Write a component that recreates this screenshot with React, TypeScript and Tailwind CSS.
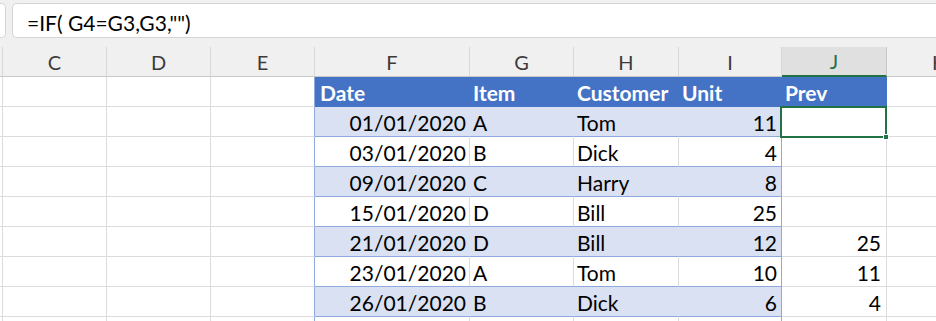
const rows = [
  { date: "01/01/2020", item: "A", customer: "Tom", unit: "11", prev: "" },
  { date: "03/01/2020", item: "B", customer: "Dick", unit: "4", prev: "" },
  { date: "09/01/2020", item: "C", customer: "Harry", unit: "8", prev: "" },
  { date: "15/01/2020", item: "D", customer: "Bill", unit: "25", prev: "" },
  { date: "21/01/2020", item: "D", customer: "Bill", unit: "12", prev: "25" },
  { date: "23/01/2020", item: "A", customer: "Tom", unit: "10", prev: "11" },
  { date: "26/01/2020", item: "B", customer: "Dick", unit: "6", prev: "4" },
];

// column B is only a sliver, its letter doesn't show
const letters = ["", "C", "D", "E", "F", "G", "H", "I", "J", "K"];

// grid cell base: 30px tall row incl. bottom border
const cell = "h-[30px] flex items-center pt-[2px] border-r border-b whitespace-nowrap overflow-hidden";

function Blank({ edge }: { edge?: boolean }) {
  return <div className={`${cell} bg-white border-b-[#dcdcdc] ${edge ? "border-r-[#8ea9db]" : "border-r-[#dcdcdc]"}`} />;
}

function DataRow({ r, band }: { r: (typeof rows)[number] | null; band: boolean }) {
  const bg = band ? "bg-[#d9e1f2]" : "bg-white";
  const inner = band ? "border-r-[#d9e1f2]" : "border-r-[#dcdcdc]";
  return (
    <>
      <Blank />
      <Blank />
      <Blank />
      <Blank edge />
      <div className={`${cell} ${bg} ${inner} border-b-[#8ea9db] justify-end pr-[3px]`}>{r?.date}</div>
      <div className={`${cell} ${bg} ${inner} border-b-[#8ea9db] pl-[3px]`}>{r?.item}</div>
      <div className={`${cell} ${bg} ${inner} border-b-[#8ea9db] pl-[3px]`}>{r?.customer}</div>
      <div className={`${cell} ${bg} border-r-[#8ea9db] border-b-[#8ea9db] justify-end pr-[4px]`}>{r?.unit}</div>
      <div className={`${cell} bg-white border-r-[#dcdcdc] border-b-[#dcdcdc] justify-end pr-[5px]`}>{r?.prev}</div>
      <Blank />
    </>
  );
}

export default function App() {
  return (
    <div className="w-[936px] h-[321px] overflow-hidden bg-white text-black" style={{ fontFamily: "Lato, 'Open Sans', sans-serif" }}>
      {/* formula bar */}
      <div className="h-[47px] bg-[#f0f0f0] flex items-start pt-[3px] gap-[6px]">
        <div className="w-[6px] h-[35px] bg-white border border-l-0 border-[#d4d4d4] rounded-r-[5px]" />
        <div className="flex-1 h-[35px] bg-white border border-r-0 border-[#d4d4d4] rounded-l-[5px] flex items-center pl-[14px] pt-[4px] text-[21px] leading-none">
          =IF( G4=G3,G3,"")
        </div>
      </div>

      <div className="grid grid-cols-[3px_104px_104px_104px_155px_104px_105px_103px_105px_104px] text-[21px] leading-none">
        {/* column letters */}
        {letters.map((l, i) =>
          l === "J" ? (
            <div key={i} className="h-[30px] flex items-center justify-center bg-[#e0e0e0] border-r border-[#c8c8c8] border-b-2 border-b-[#217346] text-[#217346] text-[20px]">
              {l}
            </div>
          ) : (
            <div key={i} className="h-[30px] flex items-center justify-center bg-[#f0f0f0] border-r border-r-[#d8d8d8] border-b border-b-[#c8c8c8] text-[#3b3b3b] text-[20px]">
              {l}
            </div>
          )
        )}

        {/* table header row */}
        <Blank />
        <Blank />
        <Blank />
        <Blank edge />
        {["Date", "Item", "Customer", "Unit", "Prev"].map((h) => (
          <div key={h} className={`${cell} bg-[#4472c4] border-[#4472c4] text-white font-bold ${h === "Date" ? "pl-[5px]" : "pl-[3px]"}`}>
            {h}
          </div>
        ))}
        <Blank />

        {rows.map((r, i) => (
          <DataRow key={r.date} r={r} band={i % 2 === 0} />
        ))}
        <DataRow r={null} band={false} />
      </div>

      {/* active cell J4 */}
      <div className="relative">
        <div className="absolute left-[780px] top-[-241px] w-[107px] h-[32px] border-2 border-[#217346]" />
        <div className="absolute left-[883px] top-[-213px] w-[6px] h-[6px] bg-[#217346] border border-white" />
      </div>
    </div>
  );
}
